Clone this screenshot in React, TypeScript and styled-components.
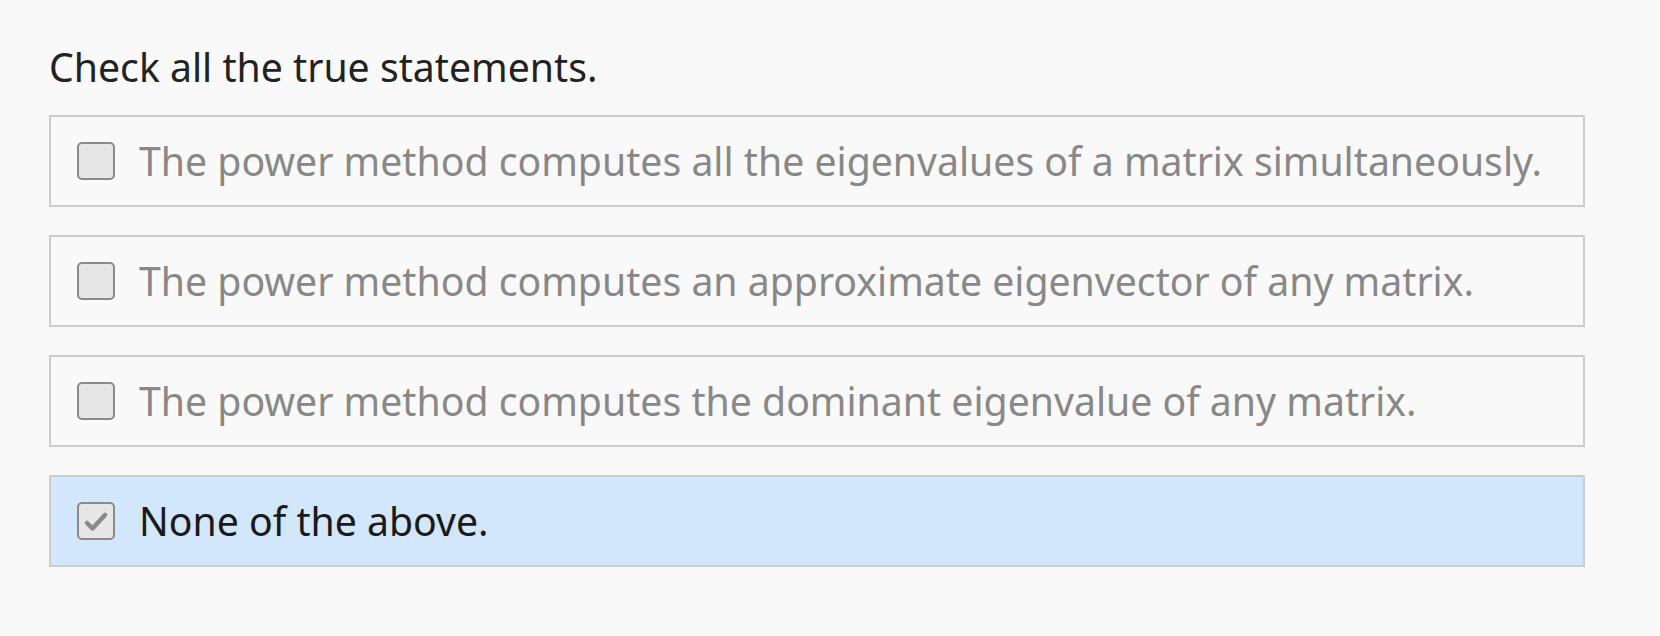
import React from 'react';
import styled, { createGlobalStyle } from 'styled-components';

const GlobalStyle = createGlobalStyle`
  html, body {
    margin: 0;
    padding: 0;
    background: #f9f9f9;
  }
  body {
    font-family: "Noto Sans", "Open Sans", Arial, sans-serif;
  }
`;

const Page = styled.div`
  width: 1660px;
  height: 636px;
  box-sizing: border-box;
  padding: 37px 0 0 49px;
`;

const Prompt = styled.p`
  margin: 0 0 18px 0;
  font-size: 39.2px;
  line-height: 60px;
  color: #222;
`;

const Options = styled.div`
  display: flex;
  flex-direction: column;
  gap: 28px;
  width: 1536px;
`;

const Option = styled.label<{ $checked?: boolean }>`
  display: flex;
  align-items: center;
  box-sizing: border-box;
  height: 92px;
  padding-left: 26px;
  border: 2px solid #cccccc;
  background: ${p => (p.$checked ? '#d2e7fb' : '#f9f9f9')};
  color: ${p => (p.$checked ? '#1a1a1a' : '#888888')};
  font-size: 39.2px;
  line-height: 1.4;
`;

const Box = styled.span`
  flex: none;
  display: flex;
  align-items: center;
  justify-content: center;
  width: 38px;
  height: 38px;
  box-sizing: border-box;
  border: 2px solid #8a8a8a;
  border-radius: 5px;
  background: #e6e6e6;
  margin-right: 24px;
`;

const Text = styled.span`
  white-space: nowrap;
`;

const Check = () => (
  <svg width="34" height="34" viewBox="0 0 34 34">
    <path d="M8 19 L13.5 24.5 L26 11" fill="none" stroke="#8a8a8a" strokeWidth="4.5" strokeLinecap="round" strokeLinejoin="round" />
  </svg>
);

const choices = [
  { text: 'The power method computes all the eigenvalues of a matrix simultaneously.', checked: false },
  { text: 'The power method computes an approximate eigenvector of any matrix.', checked: false },
  { text: 'The power method computes the dominant eigenvalue of any matrix.', checked: false },
  { text: 'None of the above.', checked: true },
];

const App: React.FC = () => {
  return (
    <>
      <GlobalStyle />
      <Page>
        <Prompt>Check all the true statements.</Prompt>
        <Options>
          {choices.map((c, i) => (
            <Option key={i} $checked={c.checked}>
              <Box>{c.checked && <Check />}</Box>
              <Text>{c.text}</Text>
            </Option>
          ))}
        </Options>
      </Page>
    </>
  );
};

export default App;
